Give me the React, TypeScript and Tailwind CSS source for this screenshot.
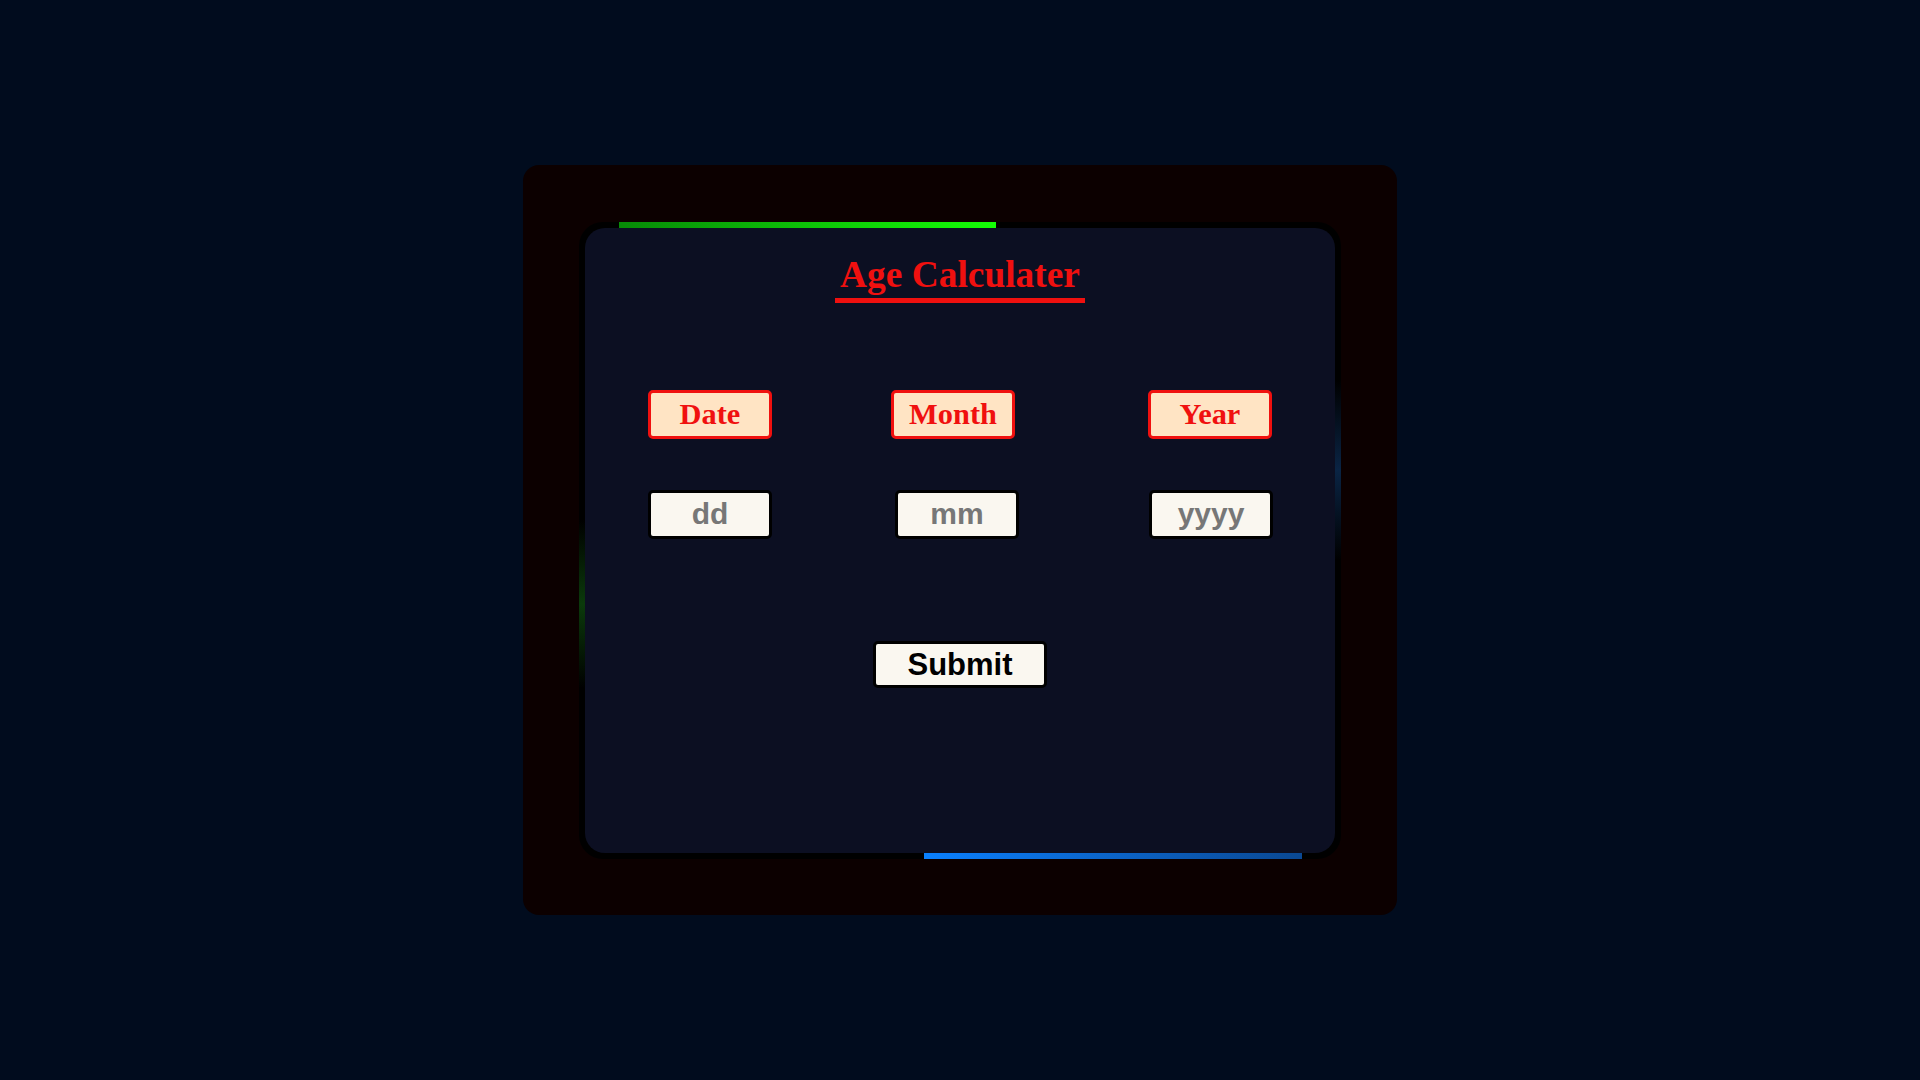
import React from 'react'

const serif = "font-['Liberation_Serif','Times_New_Roman',serif]"
const sans = "font-['Liberation_Sans',Arial,sans-serif]"

function FieldLabel({ text, className = '' }: { text: string; className?: string }) {
  return (
    <div
      className={`flex h-[49px] w-[124px] shrink-0 items-center justify-center rounded-[5px] border-[3px] border-[#f0100f] bg-[#ffe4c4] text-[30.4px] leading-[35px] font-bold text-[#f0100f] ${serif} ${className}`}
    >
      {text}
    </div>
  )
}

function FieldInput({ placeholder, className = '' }: { placeholder: string; className?: string }) {
  return (
    <input
      type="text"
      placeholder={placeholder}
      className={`h-[49px] w-[124px] shrink-0 rounded-[5px] border-[3px] border-black bg-[#faf7f0] text-center text-[30px] font-bold text-[#222] outline-none placeholder:text-[#777777] ${sans} ${className}`}
    />
  )
}

export default function App() {
  return (
    <div className="flex min-h-screen items-center justify-center bg-[#010c1e]">
      <div className="flex h-[750px] w-[874px] items-center justify-center rounded-[16px] bg-[#0c0000]">
        <div className="relative h-[637px] w-[762px] rounded-[24px] bg-black p-[6px]">
          {/* moving border highlights */}
          <div className="absolute top-0 left-[40px] h-[6px] w-[377px] bg-gradient-to-r from-[#078a07] to-[#14ff05]"></div>
          <div className="absolute bottom-0 left-[345px] h-[6px] w-[378px] bg-gradient-to-r from-[#0a80ff] to-[#0a4893]"></div>
          <div className="absolute top-[298px] left-0 h-[168px] w-[6px] bg-gradient-to-b from-transparent via-[#0b3a0b] to-transparent"></div>
          <div className="absolute top-[158px] right-0 h-[180px] w-[6px] bg-gradient-to-b from-transparent via-[#0a2444] to-transparent"></div>

          <div className="relative flex h-full w-full flex-col items-center rounded-[20px] bg-[#0c0f22] pt-[25px]">
            <h1
              className={`border-b-[5px] border-[#f0100f] px-[5px] pb-[2px] text-[37.4px] leading-[43px] font-bold text-[#f0100f] ${serif}`}
            >
              Age Calculater
            </h1>

            <div className="mt-[87px] flex w-full pl-[63px]">
              <FieldLabel text="Date" />
              <FieldLabel text="Month" className="ml-[119px]" />
              <FieldLabel text="Year" className="ml-[133px]" />
            </div>

            <div className="mt-[51px] flex w-full pl-[63px]">
              <FieldInput placeholder="dd" />
              <FieldInput placeholder="mm" className="ml-[123px]" />
              <FieldInput placeholder="yyyy" className="ml-[130px]" />
            </div>

            <button
              type="button"
              className={`mt-[102px] h-[47px] w-[174px] rounded-[5px] border-[3px] border-black bg-[#faf7f0] text-[31px] leading-none font-bold text-black ${sans}`}
            >
              Submit
            </button>
          </div>
        </div>
      </div>
    </div>
  )
}
